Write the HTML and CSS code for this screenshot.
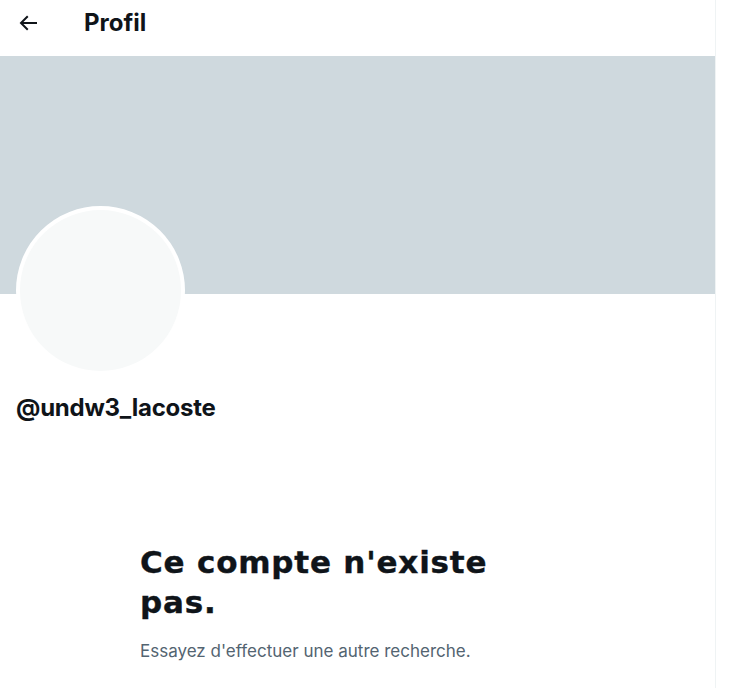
FILE: index.html
```html
<!DOCTYPE html>
<html lang="fr">
<head>
<meta charset="utf-8">
<title>Profil</title>
<link rel="stylesheet" href="styles.css">
</head>
<body>
<div class="app">
  <main class="column">
    <header class="topbar">
      <button class="back" aria-label="Retour">
        <svg viewBox="0 0 24 24" width="24" height="24"><path d="M7.414 13l5.043 5.04-1.414 1.42L3.586 12l7.457-7.46 1.414 1.42L7.414 11H21v2H7.414z"/></svg>
      </button>
      <h2 class="title">Profil</h2>
    </header>
    <div class="banner"></div>
    <section class="profile">
      <div class="avatar"></div>
      <div class="handle">@undw3_lacoste</div>
    </section>
    <section class="empty">
      <h1 class="empty-title">Ce compte n'existe pas.</h1>
      <p class="empty-text">Essayez d'effectuer une autre recherche.</p>
    </section>
  </main>
</div>
</body>
</html>
```
FILE: styles.css
```css
* { box-sizing: border-box; }
html, body { margin: 0; padding: 0; background: #fff; }
body {
  font-family: Inter, "Noto Sans", Roboto, sans-serif;
  color: #0f1419;
}
.app { display: flex; min-height: 688px; }
.column {
  width: 716px;
  min-height: 688px;
  border-right: 1px solid #eff3f4;
}
.topbar {
  height: 56px;
  display: flex;
  align-items: flex-start;
  padding: 11px 0 0 16px;
}
.back {
  width: 24px;
  height: 24px;
  padding: 0;
  border: 0;
  background: none;
  display: flex;
}
.back svg { fill: #0f1419; }
.title {
  margin: 0 0 0 44px;
  font-size: 24px;
  line-height: 24px;
  font-weight: 700;
}
.banner {
  height: 238px;
  background: #cfd9de;
}
.profile { padding: 0 16px; }
.avatar {
  width: 169px;
  height: 169px;
  margin-top: -88px;
  border: 4px solid #fff;
  border-radius: 50%;
  background: #f7f9f9;
}
.handle {
  margin-top: 21px;
  font-size: 24px;
  line-height: 24px;
  font-weight: 700;
  letter-spacing: -0.25px;
}
.empty {
  padding: 122px 0 0 140px;
}
.empty-title {
  margin: 0;
  max-width: 370px;
  font-family: "DejaVu Sans", Inter, sans-serif;
  font-size: 31px;
  line-height: 40px;
  font-weight: 700;
  letter-spacing: 0.8px;
  -webkit-text-stroke: 0.4px #0f1419;
}
.empty-text {
  margin: 19px 0 0;
  font-size: 17px;
  line-height: 20px;
  color: #536471;
}
```
